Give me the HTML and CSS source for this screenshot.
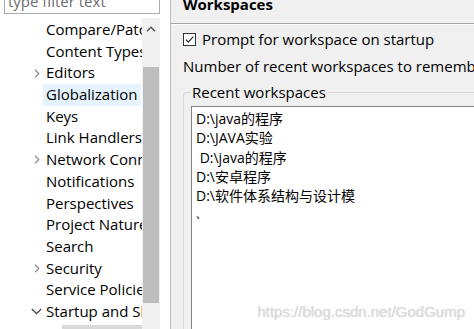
FILE: index.html
```html
<!DOCTYPE html>
<html>
<head>
<meta charset="utf-8">
<link rel="stylesheet" href="styles.css">
</head>
<body>
<div class="prefs">
  <aside class="nav">
    <div class="filter">type filter text</div>
    <div class="tree-wrap">
      <ul class="tree">
        <li class="row"><span class="tw"></span><span class="lbl">Compare/Patch</span></li>
        <li class="row"><span class="tw"></span><span class="lbl">Content Types</span></li>
        <li class="row"><span class="tw"><svg width="6" height="9" viewBox="0 0 6 9"><path d="M1 0.8 L4.8 4.5 L1 8.2" fill="none" stroke="#8e8e8e" stroke-width="1.2"/></svg></span><span class="lbl">Editors</span></li>
        <li class="row"><span class="tw"></span><span class="lbl sel">Globalization</span></li>
        <li class="row"><span class="tw"></span><span class="lbl">Keys</span></li>
        <li class="row"><span class="tw"></span><span class="lbl">Link Handlers</span></li>
        <li class="row"><span class="tw"><svg width="6" height="9" viewBox="0 0 6 9"><path d="M1 0.8 L4.8 4.5 L1 8.2" fill="none" stroke="#8e8e8e" stroke-width="1.2"/></svg></span><span class="lbl">Network Connections</span></li>
        <li class="row"><span class="tw"></span><span class="lbl">Notifications</span></li>
        <li class="row"><span class="tw"></span><span class="lbl">Perspectives</span></li>
        <li class="row"><span class="tw"></span><span class="lbl">Project Natures</span></li>
        <li class="row"><span class="tw"></span><span class="lbl">Search</span></li>
        <li class="row"><span class="tw"><svg width="6" height="9" viewBox="0 0 6 9"><path d="M1 0.8 L4.8 4.5 L1 8.2" fill="none" stroke="#8e8e8e" stroke-width="1.2"/></svg></span><span class="lbl">Security</span></li>
        <li class="row"><span class="tw"></span><span class="lbl">Service Policies</span></li>
        <li class="row"><span class="tw"><svg width="11" height="7" viewBox="0 0 11 7"><path d="M0.8 1 L5.5 5.6 L10.2 1" fill="none" stroke="#3c3c3c" stroke-width="1.2"/></svg></span><span class="lbl">Startup and Shutdown</span></li>
        <li class="row l2"><span class="tw"></span><span class="lbl cur">Workspaces</span></li>
      </ul>
      <div class="scrollbar">
        <div class="up"><svg width="10" height="6" viewBox="0 0 10 6"><path d="M1 5.2 L5 1.2 L9 5.2" fill="none" stroke="#505050" stroke-width="1.3"/></svg></div>
        <div class="thumb"></div>
      </div>
    </div>
  </aside>
  <div class="sash"></div>
  <main class="page">
    <h1 class="title">Workspaces</h1>
    <div class="content">
      <label class="check"><span class="box"><svg width="11" height="11" viewBox="0 0 11 11"><path d="M1.8 5.6 L4.3 8.1 L9.3 2.6" fill="none" stroke="#2a2a2a" stroke-width="1.2"/></svg></span>Prompt for workspace on startup</label>
      <div class="num">Number of recent workspaces to remember:</div>
      <fieldset class="group">
        <legend>Recent workspaces</legend>
        <div class="list">D:\java的程序
D:\JAVA实验
 D:\java的程序
D:\安卓程序
D:\软件体系结构与设计模
<span class="tick">`</span></div>
      </fieldset>
    </div>
    <div class="watermark">https://blog.csdn.net/GodGump</div>
  </main>
</div>
</body>
</html>
```
FILE: styles.css
```css
* { box-sizing: border-box; }
html, body { margin: 0; padding: 0; }
body {
  width: 474px;
  height: 329px;
  overflow: hidden;
  background: #fff;
  color: #000;
  font-family: "Open Sans", "Noto Sans CJK SC", sans-serif;
  font-size: 15px;
}
.prefs { display: flex; height: 329px; }

.nav {
  width: 160px;
  flex: none;
  display: flex;
  flex-direction: column;
  background: #fff;
}
.filter {
  margin: -10px 0 0 4px;
  height: 24px;
  border: 1px solid #a9abb0;
  padding-left: 3px;
  line-height: 20px;
  color: #6d6d6d;
  white-space: nowrap;
  overflow: hidden;
}
.tree-wrap {
  margin-top: 4px;
  flex: 1;
  display: flex;
  min-height: 0;
}
.tree {
  list-style: none;
  margin: 0;
  padding: 1px 0 0;
  width: 142px;
  flex: none;
  overflow: hidden;
}
.row {
  height: 21.7px;
  display: flex;
  align-items: center;
  padding-left: 30px;
  white-space: nowrap;
}
.row.l2 { padding-left: 49px; margin-top: 2px; }
.tw {
  width: 13px;
  flex: none;
  display: flex;
  justify-content: center;
  align-items: center;
}
.lbl {
  padding: 0 3px;
  line-height: 21.7px;
  height: 21.7px;
}
.lbl.sel { background: #e5f3fe; }
.lbl.cur { background: #d9d9d9; flex: 1; }

.scrollbar {
  width: 18px;
  flex: none;
  background: #f0f0f0;
  display: flex;
  flex-direction: column;
}
.up {
  height: 22px;
  display: flex;
  align-items: center;
  justify-content: center;
}
.thumb {
  margin: 27px 1px 0;
  height: 236px;
  background: #bdbdbd;
}

.sash { width: 10px; flex: none; background: #fff; }

.page {
  flex: 1;
  position: relative;
  overflow: hidden;
  background: #f0f0f0;
  border-left: 1px solid #bcbcbc;
}
.title {
  margin: 0;
  height: 24px;
  padding-left: 12px;
  font-size: 15px;
  font-weight: 700;
  line-height: 9px;
  border-bottom: 1px solid #a6a6a6;
  box-shadow: 0 1px 0 #fbfbfb;
  white-space: nowrap;
}
.content { padding: 5px 0 0 12px; }
.check {
  display: flex;
  align-items: center;
  gap: 6px;
  height: 20px;
  line-height: 20px;
  white-space: nowrap;
}
.box {
  width: 13px;
  height: 13px;
  flex: none;
  border: 1px solid #333;
  background: #fff;
  display: flex;
  align-items: center;
  justify-content: center;
}
.num {
  margin-top: 7px;
  line-height: 20px;
  white-space: nowrap;
}
.group {
  margin: 6px -40px 0 0;
  padding: 0 0 0 7px;
  border: 1px solid #d9d9d9;
  border-radius: 3px;
  min-width: 0;
  height: 300px;
}
.group legend {
  padding: 0 1px;
  line-height: 20px;
}
.list {
  margin-top: 4px;
  height: 300px;
  background: #fff;
  border-top: 1px solid #858585;
  border-left: 1px solid #858585;
  padding: 2px 0 0 4px;
  font-size: 14px;
  line-height: 19.3px;
  white-space: pre;
}
.tick { vertical-align: -8px; }
.watermark {
  position: absolute;
  right: 9px;
  top: 303px;
  font-family: "Liberation Sans", sans-serif;
  font-size: 15px;
  line-height: 18px;
  color: #dedede;
  text-shadow: 0 0 1px #c9c9c9;
  white-space: nowrap;
}
```
